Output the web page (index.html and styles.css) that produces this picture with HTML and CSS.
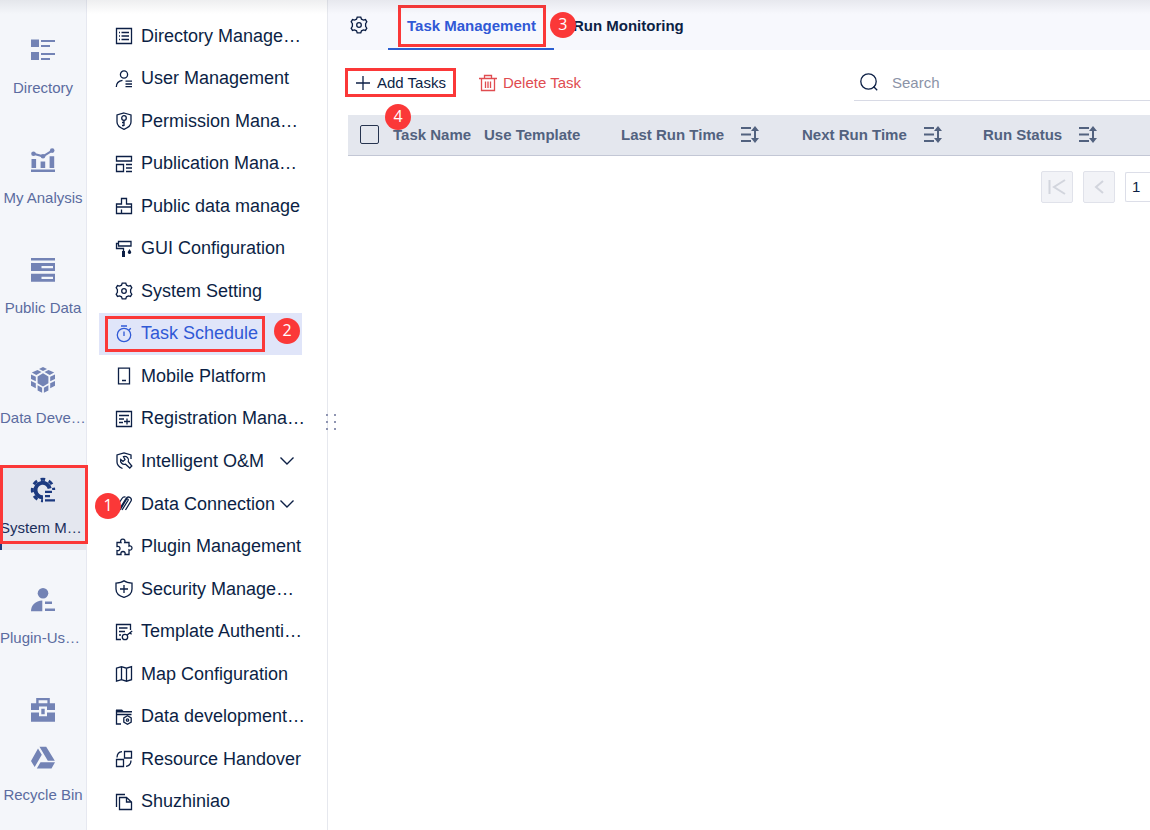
FILE: index.html
```html
<!DOCTYPE html>
<html lang="en">
<head>
<meta charset="utf-8">
<meta name="viewport" content="width=device-width, initial-scale=1">
<title>Task Schedule</title>
<link rel="stylesheet" href="styles.css">
</head>
<body>
<div class="app">
  <nav class="rail" aria-label="Modules">
    <div class="rail-list">
      <a class="rail-item" href="#directory">
        <svg class="rail-icon" viewBox="0 0 24 24"><path d="M0 1.500h8v7.500H0zM0 14h8v8H0zM10 2h14v2H10zM10 7h9v2h-9zM10 15h14v2H10zM10 20h9v2h-9z"/></svg>
        <span class="rail-label">Directory</span>
      </a>
      <a class="rail-item" href="#analysis">
        <svg class="rail-icon" viewBox="0 0 24 24"><path d="M0 21.600h24V24H0zM.5 11h4.600v9H.5zM9.600 13.500h4.600V20H9.600zM18.600 8.300h4.600V20h-4.600z"/><circle cx="2.500" cy="5.800" r="2.300"/><circle cx="12" cy="8.300" r="2.300"/><circle cx="21.200" cy="2.600" r="2.300"/><path class="graph-line" d="M2.500 5.800L12 8.300l9.200-5.700"/></svg>
        <span class="rail-label">My Analysis</span>
      </a>
      <a class="rail-item" href="#public">
        <svg class="rail-icon" viewBox="0 0 24 24"><path fill-rule="evenodd" d="M0 0h24v2.500H0zM0 5h24v8H0zM10.500 8v2.200H22V8zM0 15.700h24v8H0zM10.500 18.700v2.200H22v-2.200z"/></svg>
        <span class="rail-label">Public Data</span>
      </a>
      <a class="rail-item" href="#develop">
        <svg class="rail-icon" viewBox="0 0 24 24"><path d="M12-1l4 2-4 2-4-2zM6.500 2l4 2.100L5.300 6.900.8 4.600zM17.500 2l5.700 2.600-4.500 2.300-5.200-2.800zM12 5.200l5.400 3.300v6.800L12 18.400l-5.400-3.100V8.500zM0 6.500l4.800 2.300v4.400L0 11zM24 6.500v4.500l-4.800 2.200V8.800zM0 13l4.800 2.200v5.100L0 17.800zM24 13v4.800l-4.800 2.500v-5.100zM6.600 17.200l4.500 2.600v4.900l-4.500-2.300zM17.400 17.200v5.200l-4.500 2.300v-4.900z"/></svg>
        <span class="rail-label rail-label-cut">Data Deve…</span>
      </a>
      <a class="rail-item rail-item-active" href="#system" aria-current="page">
        <svg class="rail-icon" viewBox="0 0 24 24"><path class="cog-ring" d="M18.700 10.500A7.200 7.200 0 1 0 12 19.200"/><path class="cog-teeth" d="M22.700 12A10.700 10.700 0 1 0 12 22.700"/><path d="M14 12.700h7v2.300h-7zM14 17h5v2.300h-5zM14 21.300h10v2.300H14z"/></svg>
        <span class="rail-label rail-label-cut">System M…</span>
        <span class="mark mark-system"></span>
        <span class="badge badge-system">1</span>
      </a>
      <a class="rail-item" href="#plugin-user">
        <svg class="rail-icon" viewBox="0 0 24 24"><circle cx="12" cy="5.300" r="5.300"/><path d="M0 23.300C0 17 4.500 12.600 11.300 12.400v10.900zM14 13.500h7v2.500h-7zM14 20.500h10V23H14z"/></svg>
        <span class="rail-label rail-label-cut">Plugin-Us…</span>
      </a>
      <a class="rail-item" href="#toolbox" aria-label="Toolbox">
        <svg class="rail-icon" viewBox="0 0 24 24"><path fill-rule="evenodd" d="M5.200 0h13.600v5.200H24V12h-8V8.500H8V12H0V5.200h5.200zM7.600 2.300v2.900h8.800V2.300zM0 14.600h8v3.600h8v-3.600h8v9.100H0zM10.300 10.800h3.400v5.400h-3.400z"/></svg>
      </a>
    </div>
    <a class="rail-item rail-bottom" href="#recycle">
      <svg class="rail-icon" viewBox="0 0 24 24"><path d="M8.500 .7h6.700L23.800 14.800h-7zM7 2.500l3.800 6.200L3.700 21 0 15.100zM9.500 16.300H24L20.500 22.500H5.800z"/></svg>
      <span class="rail-label">Recycle Bin</span>
    </a>
  </nav>

  <aside class="side">
    <nav class="menu" aria-label="System management">
      <a class="menu-item" href="#m1"><svg class="icon" viewBox="0 0 18 18"><path d="M1.500 1.500h15v15h-15zM4 5.500h1M6.500 5.500H14M4 9h1M6.500 9H14M4 12.500h1M6.500 12.500H14"/></svg><span>Directory Manage…</span></a>
      <a class="menu-item" href="#m2"><svg class="icon" viewBox="0 0 18 18"><circle cx="9" cy="4.500" r="3.600"/><path d="M1.300 17c0-3.500 2.500-6.200 6.200-6.700M10.500 11.200H17M10.500 14H17M10.500 16.700H17"/></svg><span>User Management</span></a>
      <a class="menu-item" href="#m3"><svg class="icon" viewBox="0 0 18 18"><path d="M9 1l7 2v7c0 3.500-3 5.800-7 7.300C5 15.800 2 13.500 2 10V3zM9 8.500V14M9 10.500H7M9 13.500H7"/><circle cx="9" cy="6" r="2.300"/></svg><span>Permission Mana…</span></a>
      <a class="menu-item" href="#m4"><svg class="icon" viewBox="0 0 18 18"><path d="M1.500 1.500h15v4.500h-15zM1.500 9.500h7v7h-7zM11 9.500h6M11 13h6M11 16.500h6"/></svg><span>Publication Mana…</span></a>
      <a class="menu-item" href="#m5"><svg class="icon" viewBox="0 0 18 18"><path d="M1.500 7h5V1.500h5V7h5v9.500h-15zM1.500 10h15M6.500 12.500v4"/></svg><span>Public data manage</span></a>
      <a class="menu-item" href="#m6"><svg class="icon" viewBox="0 0 18 18"><path d="M3.500 1.500h12.500V6H3.500zM3.500 3.500h-2v5h7V12"/><path class="solid" d="M7 11h3v6H7zM14.500 9l1.500 2.500a1.700 1.700 0 1 1-3 0z"/></svg><span>GUI Configuration</span></a>
      <a class="menu-item" href="#m7"><svg class="icon" viewBox="0 0 18 18"><path d="M7.200 1.200h3.600l.7 2 2 .9 2-.5 1.300 2.200-1.200 1.800v2.800l1.200 1.800-1.300 2.200-2-.5-2 .9-.7 2H7.200l-.7-2-2-.9-2 .5-1.300-2.200 1.200-1.800V7.600L1.200 5.800l1.300-2.200 2 .5 2-.9z"/><circle cx="9" cy="9" r="2.300"/></svg><span>System Setting</span></a>
      <a class="menu-item menu-item-active" href="#m8" aria-current="page"><svg class="icon" viewBox="0 0 18 18"><circle cx="9" cy="10" r="6.700"/><path d="M6 1h6M9 6.500v4.500M14 5l1.800-1.800"/></svg><span>Task Schedule</span><span class="mark mark-schedule"></span><span class="badge badge-schedule">2</span></a>
      <a class="menu-item" href="#m9"><svg class="icon" viewBox="0 0 18 18"><path d="M3.500 1.200h11v15.600h-11zM7 13.500h4"/></svg><span>Mobile Platform</span></a>
      <a class="menu-item" href="#m10"><svg class="icon" viewBox="0 0 18 18"><path d="M1.500 1.500h15v15h-15zM4 5.500h10M4 9h5M4 12.500h4M12 8.500v6M9 11.500h6"/></svg><span>Registration Mana…</span></a>
      <a class="menu-item" href="#m11"><svg class="icon" viewBox="0 0 18 18"><path d="M16 7V3L9 1 2 3v7c0 3 2 5 5.500 6.500"/><path d="M8.500 4.700a3.800 3.800 0 0 1 4.800 5l3.500 4.300-2 2-4.300-3.800a3.800 3.800 0 0 1-4.800-4.700l2.300 2 2-1.800z"/></svg><span>Intelligent O&amp;M</span><svg class="chevron" viewBox="0 0 16 16"><path d="M1.500 4.500L8 11l6.500-6.500"/></svg></a>
      <a class="menu-item" href="#m12"><svg class="icon" viewBox="0 0 18 18"><path d="M4.500 14L11 3.500c2-3 6.500-1 5 2.500L10.500 15M7 15l6-9.500c.8-1.400-.8-2.200-1.600-1L5 15M1.500 12L7 3.500C8 2 9.500 1.700 10.500 2.200"/></svg><span>Data Connection</span><svg class="chevron" viewBox="0 0 16 16"><path d="M1.500 4.500L8 11l6.500-6.500"/></svg></a>
      <a class="menu-item" href="#m13"><svg class="icon" viewBox="0 0 18 18"><path d="M2 4.500h4C5 2.500 6 1.200 7.800 1.200S10.500 2.500 9.700 4.500H14v3.700c1.600-.7 3 .3 3 1.800s-1.400 2.500-3 1.800v4.700h-4c.6-2-.5-3-2-3s-2.500 1-2 3H2v-4c2 .6 3-.5 3-2s-1-2.500-3-2z"/></svg><span>Plugin Management</span></a>
      <a class="menu-item" href="#m14"><svg class="icon" viewBox="0 0 18 18"><path d="M9 .8c2 1.700 4.500 2.300 8 2.300V9c0 4-3 7-8 8.400C4 16 1 13 1 9V3.100c3.500 0 6-.6 8-2.300zM9 5v8M5 9h8"/></svg><span>Security Manage…</span></a>
      <a class="menu-item" href="#m15"><svg class="icon" viewBox="0 0 18 18"><path d="M6 16.500H1.500v-15h14V7M4 5h8.500M4 8.500h6M4 12h2M12.200 12l5-4M15 9.500l1.500 1.800"/><circle cx="10" cy="14" r="2.700"/></svg><span>Template Authenti…</span></a>
      <a class="menu-item" href="#m16"><svg class="icon" viewBox="0 0 18 18"><path d="M1.500 3.200l5-1.500 5 1.500 5-1.500v13l-5 1.500-5-1.500-5 1.500zM6.500 1.700v13M11.500 3.200v13"/></svg><span>Map Configuration</span></a>
      <a class="menu-item" href="#m17"><svg class="icon" viewBox="0 0 18 18"><path d="M6 16H1.500V2M1 6.500h15.500"/><path class="solid" d="M1 1.500h6l1.500 1.500H17v1.500H1z"/><path d="M12.500 7.800l3.700 2.100v4.200l-3.700 2.100-3.700-2.100V9.900z"/><circle cx="12.500" cy="12" r="1.200"/></svg><span>Data development…</span></a>
      <a class="menu-item" href="#m18"><svg class="icon" viewBox="0 0 18 18"><path d="M9.500 1.500h7v6.500h-7zM1.500 9.500h7v7h-7zM2 7.500C2.200 4 4 2 7 1.700M16 10.500c-.2 3.500-2 5.500-5 5.800"/></svg><span>Resource Handover</span></a>
      <a class="menu-item" href="#m19"><svg class="icon" viewBox="0 0 18 18"><path d="M1.500 14V1.500H10M4.500 4.500h7l5 4.500v7.500h-12zM11.500 4.500V9h5"/></svg><span>Shuzhiniao</span></a>
    </nav>
    <svg class="grip" viewBox="0 0 12 18"><path d="M1 1h2v2H1zM9 1h2v2H9zM1 8h2v2H1zM9 8h2v2H9zM1 15h2v2H1zM9 15h2v2H9z"/></svg>
  </aside>

  <main class="main">
    <header class="tabs">
      <button class="gear" type="button" aria-label="Settings"><svg class="icon" viewBox="0 0 18 18"><path d="M7.200 1.200h3.600l.7 2 2 .9 2-.5 1.300 2.200-1.200 1.800v2.800l1.200 1.800-1.300 2.200-2-.5-2 .9-.7 2H7.200l-.7-2-2-.9-2 .5-1.300-2.200 1.200-1.800V7.600L1.200 5.800l1.300-2.200 2 .5 2-.9z"/><circle cx="9" cy="9" r="2.300"/></svg></button>
      <button class="tab tab-active" type="button">Task Management<span class="mark mark-tab"></span><span class="badge badge-tab">3</span></button>
      <button class="tab" type="button">Run Monitoring</button>
    </header>
    <section class="content">
      <div class="toolbar">
        <button class="action action-add" type="button"><svg class="icon plus" viewBox="0 0 14 14"><path d="M7 0v14M0 7h14"/></svg>Add Tasks<span class="mark mark-add"></span><span class="badge badge-add">4</span></button>
        <button class="action action-delete" type="button"><svg class="icon" viewBox="0 0 18 18"><path d="M0 4.500h18M5.500 4V1.500h7V4M2.500 4.500v12h13v-12M6.500 7.500v6.500M11.500 7.500v6.500M9 7.500v6.500"/></svg>Delete Task</button>
        <label class="search"><svg class="icon" viewBox="0 0 18 18"><circle cx="8.500" cy="8.500" r="7.700"/><path d="M13.500 13.500l3.700 3.700"/></svg><input class="search-input" type="search" placeholder="Search" aria-label="Search"></label>
      </div>
      <table class="table">
        <colgroup><col class="col-check"><col class="col-name"><col class="col-template"><col class="col-time"><col class="col-time"><col></colgroup>
        <thead>
          <tr>
            <th><input class="check" type="checkbox" aria-label="Select all tasks"></th>
            <th>Task Name</th>
            <th>Use Template</th>
            <th><span class="sortable">Last Run Time<svg class="sort" viewBox="0 0 18 18"><path d="M0 2h10M0 8.500h10M0 15h10M14 3v11"/><path class="solid" d="M14 0l4 5h-8zM14 17l4-5h-8z"/></svg></span></th>
            <th><span class="sortable">Next Run Time<svg class="sort" viewBox="0 0 18 18"><path d="M0 2h10M0 8.500h10M0 15h10M14 3v11"/><path class="solid" d="M14 0l4 5h-8zM14 17l4-5h-8z"/></svg></span></th>
            <th><span class="sortable">Run Status<svg class="sort" viewBox="0 0 18 18"><path d="M0 2h10M0 8.500h10M0 15h10M14 3v11"/><path class="solid" d="M14 0l4 5h-8zM14 17l4-5h-8z"/></svg></span></th>
          </tr>
        </thead>
      </table>
      <div class="pager">
        <button class="page-button" type="button" aria-label="First page" disabled><svg viewBox="0 0 18 18"><path d="M1.500 2v14M17 2L6 9l11 7"/></svg></button>
        <button class="page-button" type="button" aria-label="Previous page" disabled><svg viewBox="0 0 18 18"><path d="M13 3L6 9l7 6"/></svg></button>
        <input class="page-number" type="text" value="1" aria-label="Page number">
      </div>
    </section>
  </main>
</div>
</body>
</html>
```

FILE: styles.css
```css
* {
  box-sizing: border-box;
}

body {
  margin: 0;
  font-family: "Liberation Sans", Arial, sans-serif;
  font-size: 15px;
  color: #0c1f45;
  background: #fff;
}

button {
  padding: 0;
  border: 0;
  background: none;
  font: inherit;
  color: inherit;
}

a {
  color: inherit;
  text-decoration: none;
}

.app {
  position: relative;
  display: flex;
  height: 100vh;
  overflow: hidden;
}

.app::after {
  content: "";
  position: absolute;
  inset: 0 0 auto;
  height: 14px;
  background: linear-gradient(rgba(40, 45, 60, 0.08), rgba(40, 45, 60, 0));
  pointer-events: none;
}

/* Module rail */
.rail {
  display: flex;
  flex: none;
  flex-direction: column;
  width: 87px;
  border-right: 1px solid #e6e8f0;
  background: #f4f6fa;
  color: #5b6ca0;
}

.rail-list {
  display: flex;
  flex: 1;
  flex-direction: column;
  gap: 26px;
  min-height: 0;
  padding-top: 26px;
}

.rail-item {
  position: relative;
  display: flex;
  flex: none;
  flex-direction: column;
  align-items: center;
  gap: 16px;
  height: 84px;
  padding-top: 12px;
  line-height: 20px;
  white-space: nowrap;
}

.rail-item-active {
  background: #e4e7ef;
  color: #1b2f5c;
  box-shadow: inset 2px 0 #1c3a80;
}

.rail-icon {
  width: 24px;
  height: 24px;
  overflow: visible;
  fill: #7383b5;
}

.rail-item-active .rail-icon {
  fill: #1c3a80;
}

.graph-line {
  fill: none;
  stroke: #7383b5;
  stroke-width: 2;
}

.cog-ring {
  fill: none;
  stroke: #1c3a80;
  stroke-width: 4;
}

.cog-teeth {
  fill: none;
  stroke: #1c3a80;
  stroke-width: 3;
  stroke-dasharray: 4.6 3.8;
  stroke-dashoffset: 2.3;
}

.rail-label-cut {
  align-self: flex-start;
}

.rail-bottom {
  gap: 15px;
  height: 96px;
}

/* Section menu */
.side {
  position: relative;
  flex: none;
  width: 241px;
  border-right: 1px solid #e6e8ee;
}

.menu {
  display: flex;
  flex-direction: column;
  justify-content: space-between;
  height: 100%;
  padding: 15px 25px 7px 12px;
}

.menu-item {
  position: relative;
  display: flex;
  flex: none;
  align-items: center;
  gap: 8px;
  height: 42px;
  padding: 0 7px 0 16px;
  font-size: 18px;
  white-space: nowrap;
}

.menu-item-active {
  background: #e0e5f9;
  color: #3059d6;
}

.icon {
  flex: none;
  width: 18px;
  height: 18px;
  fill: none;
  stroke: currentColor;
  stroke-width: 1.3;
}

.solid {
  fill: currentColor;
  stroke: none;
}

.chevron {
  flex: none;
  width: 16px;
  height: 16px;
  margin-left: auto;
  fill: none;
  stroke: currentColor;
  stroke-width: 1.4;
}

/* Lets a long label run up to its chevron */
.menu-item span:has(+ .chevron) {
  margin-right: -8px;
}

.grip {
  position: absolute;
  top: 413px;
  right: -10px;
  width: 12px;
  height: 18px;
  fill: #8f95b2;
}

/* Main area */
.main {
  flex: 1;
  min-width: 0;
}

.tabs {
  display: flex;
  height: 50px;
  padding-left: 20px;
  background: #f7f8fd;
}

.gear {
  width: 20px;
  margin-right: 20px;
}

.gear .icon {
  display: block;
  margin-left: auto;
}

.tab {
  position: relative;
  padding: 0 18px 0 19px;
  font-weight: bold;
}

.tab-active {
  color: #3059d6;
  box-shadow: inset 0 -2px #2b5fd0;
}

.content {
  padding-left: 20px;
}

.toolbar {
  display: flex;
  align-items: center;
  height: 65px;
}

.action {
  position: relative;
  display: flex;
  align-items: center;
  gap: 7px;
  height: 28px;
}

.action-add {
  margin: 0 33px 0 8px;
}

.plus {
  width: 14px;
  height: 14px;
}

.action-delete {
  gap: 6px;
  color: #e04c50;
}

.search {
  display: flex;
  align-items: center;
  gap: 14px;
  width: 296px;
  height: 36px;
  margin-left: auto;
  padding-left: 6px;
  border-bottom: 1px solid #d8dae5;
}

.search-input {
  flex: 1;
  min-width: 0;
  padding: 0;
  border: 0;
  outline: 0;
  background: none;
  font: inherit;
}

.search-input::placeholder {
  color: #8b93a7;
}

.table {
  width: 100%;
  border-collapse: collapse;
  table-layout: fixed;
}

.table th {
  height: 40px;
  padding: 0;
  border-bottom: 1px solid #c3c7d5;
  background: #e4e7ee;
  color: #52627f;
  text-align: left;
  white-space: nowrap;
}

.col-check {
  width: 45px;
}

.col-name {
  width: 91px;
}

.col-template {
  width: 137px;
}

.col-time {
  width: 181px;
}

.check {
  display: block;
  width: 19px;
  height: 19px;
  margin: 0 0 0 12px;
  border: 1px solid #26344f;
  border-radius: 2px;
  appearance: none;
}

.sortable {
  display: flex;
  align-items: center;
  gap: 17px;
}

.sort {
  width: 18px;
  height: 18px;
  fill: none;
  stroke: currentColor;
  stroke-width: 2;
}

.pager {
  display: flex;
  align-items: center;
  justify-content: flex-end;
  gap: 10px;
  padding-top: 15px;
}

.page-button {
  display: grid;
  place-items: center;
  width: 32px;
  height: 32px;
  border: 1px solid #e0e2ea;
  border-radius: 2px;
  background: #f2f3f7;
}

.page-button svg {
  width: 18px;
  height: 18px;
  fill: none;
  stroke: #d2d5dd;
  stroke-width: 2;
}

.page-number {
  width: 25px;
  height: 30px;
  padding: 0 0 0 6px;
  border: 1px solid #dcdee8;
  border-right: 0;
  border-radius: 2px 0 0 2px;
  font: inherit;
  color: #0c1f45;
}

/* Step annotations laid over the interface */
.mark {
  position: absolute;
  border: 3px solid #fb3838;
  pointer-events: none;
}

.badge {
  position: absolute;
  z-index: 2;
  width: 26px;
  height: 26px;
  border-radius: 50%;
  background: #fb3838;
  color: #fff;
  font: 16px/24px "Open Sans", sans-serif;
  text-align: center;
}

.mark-system {
  inset: -1px -2px 6px 0;
}

.badge-system {
  top: 27px;
  left: 95px;
}

.mark-schedule {
  inset: 3px 37px 3px 6px;
}

.badge-schedule {
  top: 5px;
  right: 2px;
}

.mark-tab {
  inset: 5px 8px 3px 10px;
}

.badge-tab {
  top: 12px;
  right: -22px;
}

.mark-add {
  inset: -1px -10px 0 -11px;
}

.badge-add {
  top: 35px;
  left: 29px;
}
```
